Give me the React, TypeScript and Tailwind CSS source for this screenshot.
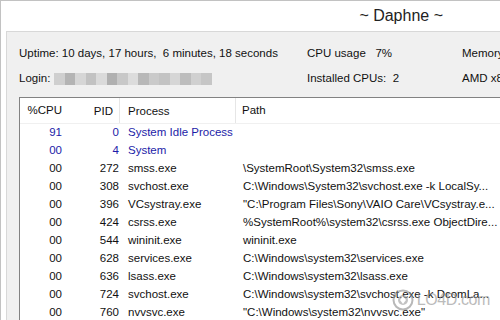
import React from "react";

type Proc = { cpu: string; pid: number; name: string; path: string; sys?: boolean };

const procs: Proc[] = [
  { cpu: "91", pid: 0, name: "System Idle Process", path: "", sys: true },
  { cpu: "00", pid: 4, name: "System", path: "", sys: true },
  { cpu: "00", pid: 272, name: "smss.exe", path: "\\SystemRoot\\System32\\smss.exe" },
  { cpu: "00", pid: 308, name: "svchost.exe", path: "C:\\Windows\\System32\\svchost.exe -k LocalSy..." },
  { cpu: "00", pid: 396, name: "VCsystray.exe", path: "\"C:\\Program Files\\Sony\\VAIO Care\\VCsystray.e..." },
  { cpu: "00", pid: 424, name: "csrss.exe", path: "%SystemRoot%\\system32\\csrss.exe ObjectDire..." },
  { cpu: "00", pid: 544, name: "wininit.exe", path: "wininit.exe" },
  { cpu: "00", pid: 628, name: "services.exe", path: "C:\\Windows\\system32\\services.exe" },
  { cpu: "00", pid: 636, name: "lsass.exe", path: "C:\\Windows\\system32\\lsass.exe" },
  { cpu: "00", pid: 724, name: "svchost.exe", path: "C:\\Windows\\system32\\svchost.exe -k DcomLa..." },
  { cpu: "00", pid: 760, name: "nvvsvc.exe", path: "\"C:\\Windows\\system32\\nvvsvc.exe\"" },
];

// pixelated blur standing in for the login name
const blur = ["#cfcfcf", "#b4b4b4", "#d6d6d6", "#c2c2c2", "#dadada", "#b0b0b0", "#c8c8c8", "#dcdcdc", "#b8b8b8", "#cacaca", "#c3c3c3", "#d6d6d6", "#bdbdbd", "#d0d0d0", "#c6c6c6"];

function Watermark() {
  return (
    <div className="absolute bottom-[8px] right-[10px] flex items-center gap-[3px] opacity-60">
      <svg width="22" height="22" viewBox="0 0 22 22">
        <circle cx="11" cy="11" r="9.5" fill="none" stroke="#8a8a8a" strokeWidth="2" />
        <circle cx="11" cy="11" r="5" fill="#9a9a9a" />
        <path d="M8 11 L11 7 L14 11 L11 15 Z" fill="#fff" />
      </svg>
      <span className="text-[16px] tracking-tight text-[#8f8f8f]">LO4D.com</span>
    </div>
  );
}

export default function App() {
  return (
    <div
      className="relative h-[320px] w-[500px] overflow-hidden border-l border-t border-[#c2c2c2] bg-white text-[11.5px] text-[#111]"
      style={{ fontFamily: "'Liberation Sans', Arial, sans-serif" }}
    >
      <div className="flex h-[30px] items-center justify-end pr-[57px]">
        <span className="text-[16px] text-[#222]">~ Daphne ~</span>
      </div>

      <div className="ml-[5px] h-[290px] border-l border-t border-[#d8d8d8] bg-[#f0f0f0] pl-[12px] pt-[12px]">
        <div className="flex h-[19px] items-center whitespace-pre">
          <span className="w-[288px] shrink-0">Uptime: 10 days, 17 hours,  6 minutes, 18 seconds</span>
          <span className="w-[155px] shrink-0">CPU usage   7%</span>
          <span className="shrink-0">Memory</span>
        </div>
        <div className="mt-[6px] flex h-[19px] items-center whitespace-pre">
          <span className="flex w-[288px] shrink-0 items-center">
            Login:
            <span className="ml-[4px] flex h-[12px]">
              {blur.map((c, i) => (
                <span key={i} className="h-full w-[10.5px]" style={{ background: c }} />
              ))}
            </span>
          </span>
          <span className="w-[155px] shrink-0">Installed CPUs:  2</span>
          <span className="shrink-0">AMD x86</span>
        </div>

        <div className="mt-[9px] h-[250px] border-l border-t border-[#828282] bg-white">
          <div className="flex h-[26px] items-center border-b border-[#f0f0f0] whitespace-nowrap">
            <div className="w-[42px] shrink-0 text-right">%CPU</div>
            <div className="h-full w-[58px] shrink-0 border-r border-[#e6e6e6] pr-[6px] text-right leading-[26px]">PID</div>
            <div className="h-full w-[116px] shrink-0 border-r border-[#e6e6e6] pl-[8px] leading-[26px]">Process</div>
            <div className="shrink-0 pl-[6px]">Path</div>
          </div>
          {procs.map((p) => (
            <div key={p.pid} className={`flex h-[18px] items-center whitespace-nowrap ${p.sys ? "text-[#1c1ca8]" : ""}`}>
              <div className="w-[42px] shrink-0 text-right">{p.cpu}</div>
              <div className="w-[58px] shrink-0 pr-[1px] text-right">{p.pid}</div>
              <div className="w-[116px] shrink-0 pl-[8px]">{p.name}</div>
              <div className="shrink-0 pl-[7px]">{p.path}</div>
            </div>
          ))}
        </div>
      </div>

      <Watermark />
    </div>
  );
}
